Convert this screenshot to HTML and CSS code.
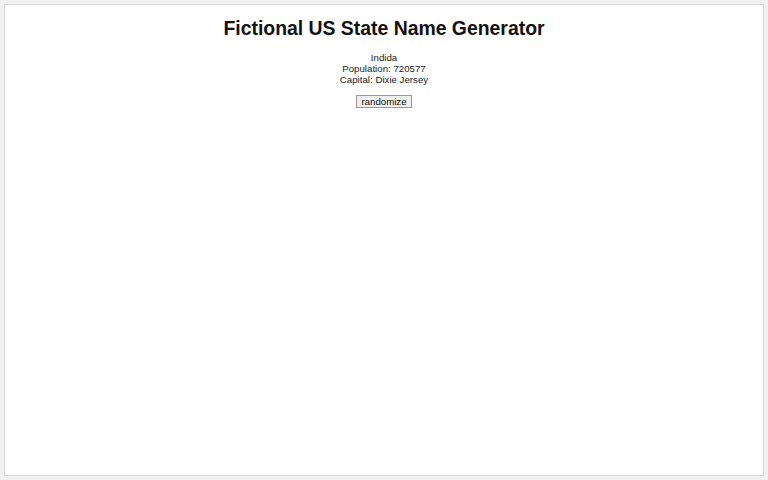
FILE: index.html
```html
<!DOCTYPE html>
<html lang="en">
<head>
    <meta charset="UTF-8">
    <title>Fictional US State Name Generator</title>
    <link rel="stylesheet" href="styles.css">
</head>
<body>
    <div class="page">
        <h1>Fictional US State Name Generator</h1>
        <div class="state" id="state">
            <div id="state-name">Indida</div>
            <div>Population: <span id="population">720577</span></div>
            <div>Capital: <span id="capital">Dixie Jersey</span></div>
        </div>
        <button id="randomize">randomize</button>
    </div>
</body>
</html>
```

FILE: styles.css
```css
body {
    margin: 0;
    padding: 4px;
    background-color: #f0f0f0;
    font-family: 'Liberation Sans', Arial, sans-serif;
    height: 480px;
    box-sizing: border-box;
}
.page {
    height: 100%;
    box-sizing: border-box;
    background: white;
    border: 1px solid #dcdcdc;
    text-align: center;
    padding-top: 12px;
}
h1 {
    margin: 0;
    font-size: 19.4px;
    line-height: 23px;
    font-weight: bold;
    color: #111;
}
.state {
    margin-top: 12px;
    font-size: 9.7px;
    line-height: 11px;
    color: #222;
}
button {
    margin-top: 10px;
    font-family: 'Liberation Sans', Arial, sans-serif;
    font-size: 9.7px;
    line-height: 11px;
    padding: 0 4px;
    background: #efefef;
    border: 1px solid #999;
    border-radius: 0;
    color: #111;
}
```
